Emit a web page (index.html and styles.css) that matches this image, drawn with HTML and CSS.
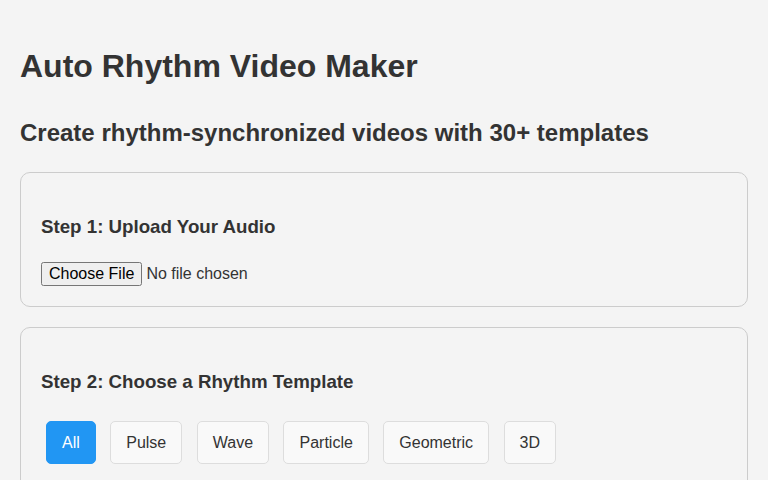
FILE: index.html
```html
<!DOCTYPE html>
<html lang="en">
<head>
<meta charset="utf-8">
<title>Auto Rhythm Video Maker</title>
<link rel="stylesheet" href="styles.css">
</head>
<body>
  <h1>Auto Rhythm Video Maker</h1>
  <h2>Create rhythm-synchronized videos with 30+ templates</h2>
  <section class="card">
    <h3>Step 1: Upload Your Audio</h3>
    <input type="file" class="file-input" accept="audio/*">
  </section>
  <section class="card">
    <h3>Step 2: Choose a Rhythm Template</h3>
    <div class="filters">
      <button class="filter active">All</button>
      <button class="filter">Pulse</button>
      <button class="filter">Wave</button>
      <button class="filter">Particle</button>
      <button class="filter">Geometric</button>
      <button class="filter">3D</button>
    </div>
  </section>
</body>
</html>
```
FILE: styles.css
```css
html, body {
  margin: 0;
}
body {
  padding: 20px;
  background: #f4f4f4;
  color: #333;
  font-family: "Liberation Sans", Arial, sans-serif;
  font-size: 16px;
  line-height: 1.6;
}
h1 {
  font-size: 32px;
  margin: 21.44px 0;
}
h2 {
  font-size: 24px;
  margin: 19.92px 0;
}
h3 {
  font-size: 18.72px;
  margin: 18.72px 0;
}
.card {
  border: 1px solid #ccc;
  border-radius: 10px;
  padding: 20px;
  margin-bottom: 20px;
  background: #f4f4f4;
}
.file-input {
  font: inherit;
  color: #333;
}
.filters {
  line-height: normal;
}
.filter {
  display: inline-block;
  margin: 5px;
  padding: 8px 15px;
  font-family: "Liberation Sans", Arial, sans-serif;
  font-size: 16px;
  line-height: 25.6px;
  color: #333;
  background: #f9f9f9;
  border: 1px solid #ddd;
  border-radius: 5px;
  cursor: pointer;
}
.filter.active {
  background: #2196f3;
  border-color: #2196f3;
  color: #fff;
}
```
